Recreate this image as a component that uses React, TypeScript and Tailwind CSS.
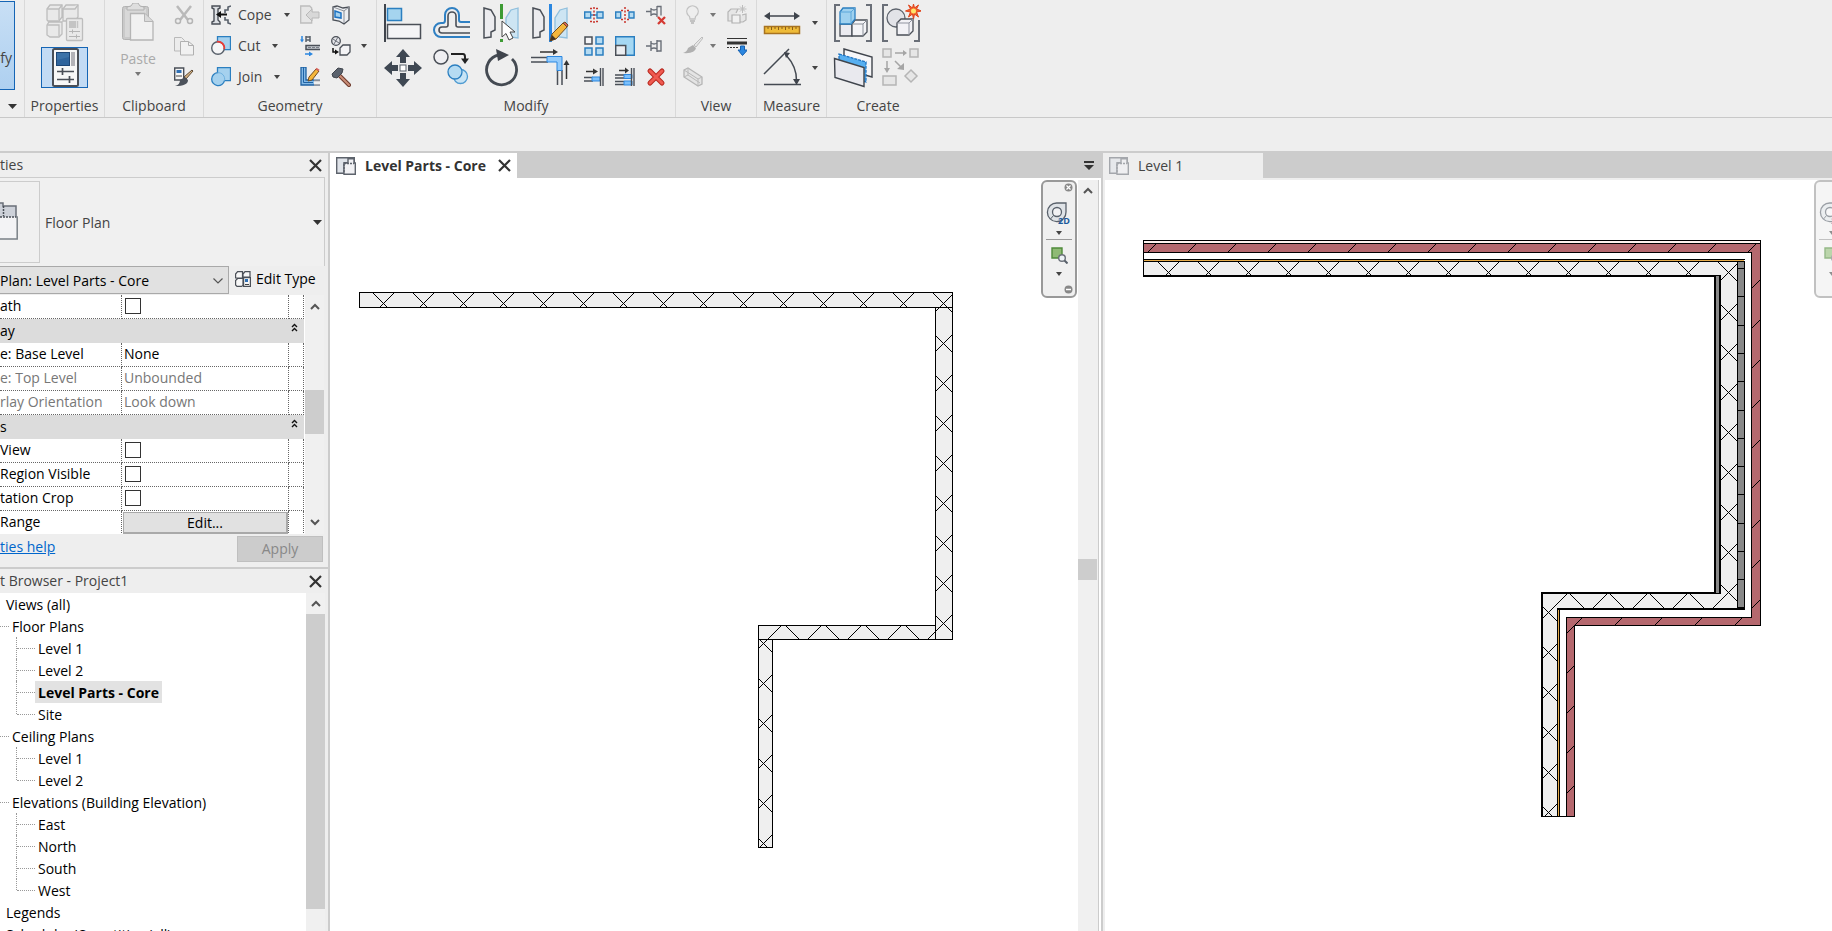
import type { ReactNode } from "react";

interface IconProps {
  children: ReactNode;
  size?: number;
}

function Icon({ children, size = 20 }: IconProps) {
  return (
    <svg
      width={size}
      height={size}
      viewBox={`0 0 ${size} ${size}`}
      fill="none"
      className="block shrink-0"
      aria-hidden="true"
    >
      {children}
    </svg>
  );
}

function Caret({ className = "text-[#444]" }: { className?: string }) {
  return (
    <svg width="6" height="4" viewBox="0 0 6 4" className={`block shrink-0 ${className}`} aria-hidden="true">
      <path d="M0 0h6L3 4z" fill="currentColor" />
    </svg>
  );
}

function WideCaret() {
  return (
    <svg width="9" height="5" viewBox="0 0 9 5" className="block shrink-0 text-[#333]" aria-hidden="true">
      <path d="M0 0h9L4.5 5z" fill="currentColor" />
    </svg>
  );
}

function Chevron({ up = false }: { up?: boolean }) {
  return (
    <svg width="10" height="7" viewBox="0 0 10 7" fill="none" className="block" aria-hidden="true">
      <path d={up ? "M1 6l4-4 4 4" : "M1 1l4 4 4-4"} stroke="#555" strokeWidth="2" />
    </svg>
  );
}

function CloseIcon() {
  return (
    <svg width="13" height="13" viewBox="0 0 13 13" fill="none" className="block" aria-hidden="true">
      <path d="M1 1l11 11M12 1L1 12" stroke="#333" strokeWidth="2.200" />
    </svg>
  );
}

/* ---------- ribbon icons, large (40 x 40) ---------- */

const typeProperties = (
  <Icon size={40}>
    <g fill="#e9e9e9" stroke="#bdbdbd" strokeWidth="1.3">
      <path d="M2 6l3-4h12v12l-3 4H3l-1-1zM18 6l3-4h12v12l-3 4H18zM2 22l2-3h13v12l-3 3H5l-3-2z" />
      <path d="M2 6h12v12M14 6l3-4M18 6h12l3-4M2 22h12v12" />
      <rect x="21.5" y="15.5" width="16" height="22" rx="1" />
    </g>
    <path d="M24 18h7v7h-7z" fill="#c4c4c4" />
    <path d="M32.500 18v7" stroke="#c4c4c4" strokeWidth="1.5" />
    <path d="M24 28.500h11M24 33.500h11M27.500 26.500v4M31.500 31.500v4" stroke="#b5b5b5" />
  </Icon>
);

const propertiesPalette = (
  <Icon size={40}>
    <rect x="8" y="1" width="25" height="37" rx="1.500" fill="#f7f7f7" stroke="#4a4f57" strokeWidth="2" />
    <rect x="11.500" y="4.500" width="13" height="13" fill="#2f649c" stroke="#1d4676" />
    <path d="M12 5h12v4l-12 3z" fill="#4a7fb4" opacity=".5" />
    <path d="M26 4h4v14h-4z" fill="#b3b3b8" />
    <path d="M12 23.500h17M12 31.500h17M17.500 20v7M24.500 28v7" stroke="#4a4f57" strokeWidth="1.700" />
  </Icon>
);

const paste = (
  <Icon size={40}>
    <rect x="4.500" y="3.500" width="26" height="33" rx="2" fill="#c9c9c9" stroke="#b2b2b2" />
    <rect x="7" y="6" width="21" height="28" fill="#d8d8d8" />
    <path d="M9 7V4l4-1 2-3h5l2 3 4 1v3z" fill="#dedede" stroke="#b0b0b0" />
    <path d="M12.500 10.500h14l8.500 8v18.500H12.500z" fill="#f1f1f1" stroke="#b5b5b5" strokeWidth="1.300" />
    <path d="M26.500 10.500v8H35" fill="#dadada" stroke="#b5b5b5" />
  </Icon>
);

const align = (
  <Icon size={40}>
    <path d="M2 1v38" stroke="#3f444c" strokeWidth="2" />
    <rect x="4.500" y="5.500" width="14" height="12" fill="#a5d4ef" stroke="#2b7fc0" strokeWidth="1.500" />
    <rect x="4.500" y="21.500" width="33" height="14" fill="#f4f4f6" stroke="#4a4f57" strokeWidth="1.500" />
  </Icon>
);

const offset = (
  <Icon size={40}>
    <path
      d="M38 34H9a6.500 6.500 0 0 1 0-14h2q2 0 2-3v-5a7 7 0 0 1 14 0v5q0 2 2 2h9"
      stroke="#2f80c3"
      strokeWidth="2"
    />
    <path
      d="M38 30H10a3 3 0 0 1 0-6h4q2 0 2-2v-9a4 4 0 0 1 8 0v9q0 2 2 2h12"
      stroke="#4a4f57"
      strokeWidth="1.600"
    />
  </Icon>
);

const mirrorPick = (
  <Icon size={40}>
    <path d="M3 5l7 2 4 7v13l-4 2v5l-7 1z" fill="#ececef" stroke="#4a4f57" strokeWidth="1.500" />
    <path d="M37 5l-7 2-5 8v12l4 2v5l8 1z" fill="#cde5f3" stroke="#8fbfdd" strokeWidth="1.300" />
    <path d="M20.500 1v15M20.500 36v3" stroke="#3d9b34" strokeWidth="3" />
    <path d="M21 18v16l4-3.500 3 6.500 4-2-3-6h5z" fill="#fff" stroke="#444" />
  </Icon>
);

const mirrorDraw = (
  <Icon size={40}>
    <path d="M3 5l7 2 4 7v13l-4 2v5l-7 1z" fill="#ececef" stroke="#4a4f57" strokeWidth="1.500" />
    <path d="M37 5l-7 2-5 8v12l4 2v5l8 1z" fill="#cde5f3" stroke="#8fbfdd" strokeWidth="1.300" />
    <path d="M20.500 1v38" stroke="#2b87e0" strokeWidth="3" />
    <path d="M20 38l2-7 11-11 4 4-11 12z" fill="#f4b63b" stroke="#704a20" />
    <path d="M33 20l2-1 3 3-1 2z" fill="#d9635b" stroke="#704a20" />
    <path d="M20 38l2-6 4 4z" fill="#443322" />
  </Icon>
);

const move = (
  <Icon size={40}>
    <g fill="#3f4853">
      <path d="M20 1l7 8h-4v6h-6V9h-4zM20 39l7-8h-4v-6h-6v6h-4zM1 20l8-7v4h6v6H9v4zM39 20l-8-7v4h-6v6h6v4z" />
    </g>
    <rect x="17" y="17" width="6" height="6" fill="#fff" stroke="#59616b" />
  </Icon>
);

const copyTool = (
  <Icon size={40}>
    <circle cx="9" cy="9" r="7" fill="#efeff2" stroke="#4a4f57" strokeWidth="1.500" />
    <path d="M19 6h12q2 0 2 3v3" stroke="#222" strokeWidth="2" />
    <path d="M29 10.500h8L33 16z" fill="#222" />
    <circle cx="28.500" cy="28.500" r="7" fill="#c8e4f5" stroke="#4f9bd1" strokeWidth="1.300" />
    <circle cx="23" cy="24" r="7" fill="#b5dbf2" stroke="#2b7fc0" strokeWidth="1.300" />
  </Icon>
);

const rotate = (
  <Icon size={40}>
    <path d="M31 11a15 15 0 1 1-13-4" stroke="#444a52" strokeWidth="2.800" />
    <path d="M15 1l13 6-11 6z" fill="#3f444c" />
  </Icon>
);

const trimCorner = (
  <Icon size={40}>
    <path d="M10 4h14" stroke="#333" strokeWidth="1.500" />
    <path d="M23 1l5 3-5 3z" fill="#333" />
    <path d="M1 9.500h17M1 14h17M27.500 22v15M32 22v15" stroke="#4a4f57" strokeWidth="1.500" />
    <path d="M17 8.500h15v14h-5V14H17z" fill="#94cbfb" stroke="#2b87e0" />
    <path d="M36.500 31V16" stroke="#333" strokeWidth="1.500" />
    <path d="M33.500 17l3-5 3 5z" fill="#333" />
  </Icon>
);

const measureLinear = (
  <Icon size={40}>
    <path d="M5 13h30" stroke="#3f444c" strokeWidth="1.500" />
    <path d="M2 13l6-4v8zM38 13l-6-4v8z" fill="#3f444c" />
    <rect x="2.500" y="23.500" width="35" height="7" fill="#eebb38" stroke="#a87320" strokeWidth="1.500" />
    <path d="M6 24v2M9.500 24v3M13 24v2M16.500 24v3M20 24v2M23.500 24v3M27 24v2M30.500 24v3M34 24v2" stroke="#8a5e18" />
  </Icon>
);

const measureAngle = (
  <Icon size={40}>
    <path d="M2 36.500h37M2 26L27 1M24 7q11 12 10.500 26" stroke="#444a52" strokeWidth="1.500" />
    <path d="M22 4l6 1-4 5zM31 31h7l-3.500 6z" fill="#3f444c" />
  </Icon>
);

const createAssembly = (
  <Icon size={40}>
    <path d="M7 2H2v36h5M33 2h5v36h-5" stroke="#6a6f78" strokeWidth="2" />
    <path d="M7 21h12v12H7z" fill="#ebebf0" stroke="#4a4f57" strokeWidth="1.300" />
    <path d="M19 21l3-4h12v12l-4 4H19z" fill="#f4f4f7" stroke="#4a4f57" strokeWidth="1.300" />
    <path d="M19 21h11v12M30 21l4-4" stroke="#8a8f98" />
    <path d="M7 9l3-4h12v11l-4 5H7z" fill="#9fd1ef" stroke="#2b7fc0" strokeWidth="1.300" />
    <path d="M7 9h11v12M18 9l4-4" stroke="#5da7da" />
  </Icon>
);

const createGroup = (
  <Icon size={40}>
    <path d="M7 2H2v36h5M33 38h5V17" stroke="#6a6f78" strokeWidth="2" />
    <circle cx="15" cy="15" r="9" fill="#e2e3e8" stroke="#5d636c" strokeWidth="1.300" />
    <path d="M16 20l4-4h12v12l-4 4H16z" fill="#f2f2f6" stroke="#4a4f57" strokeWidth="1.300" />
    <path d="M16 20h12v12M28 20l4-4" stroke="#9094a0" />
    <path
      d="M32.500 1l1 4 4-3-2 4 5 2-5 1 2 5-4-3-1 5-1-5-4 3 2-5-5-1 5-2-2-4 4 3z"
      fill="#f4622c"
      stroke="#e0441c"
    />
    <circle cx="32.500" cy="8" r="2.500" fill="#ffe66a" />
  </Icon>
);

const createParts = (
  <Icon size={40}>
    <path d="M11 1l28 8v20l-28-8z" fill="#f6f6f8" stroke="#3f444c" strokeWidth="1.400" />
    <path d="M6 6l27 8v20L6 27z" fill="#57aff0" stroke="#1e73c2" strokeWidth="1.300" strokeDasharray="3 1" />
    <path d="M1.500 10.500L31 19.500v19L2 29.500z" fill="#e9e9ee" stroke="#3f444c" strokeWidth="1.400" />
  </Icon>
);

const createSimilar = (
  <Icon size={40}>
    <g fill="#e6e6e6" stroke="#b5b5b5" strokeWidth="1.500">
      <path d="M2 1h8v8H2zM29 1h8v8h-8zM2 28h13v9H2zM30 22l6 6-6 6-6-6z" />
    </g>
    <path d="M14 5h9M6 13v8M14 13l6 6" stroke="#a5a5a5" strokeWidth="1.500" />
    <path d="M22 2l4 3-4 3zM3 20h6l-3 5zM16 21l7-6v7z" fill="#a5a5a5" />
  </Icon>
);

/* ---------- ribbon icons, small (20 x 20) ---------- */

const cut = (
  <Icon>
    <path d="M3 1l11 14M17 1L6 15" stroke="#b9b9b9" strokeWidth="2.500" />
    <circle cx="4" cy="16" r="2.500" stroke="#b5b5b5" strokeWidth="1.500" />
    <circle cx="16" cy="16" r="2.500" stroke="#b5b5b5" strokeWidth="1.500" />
  </Icon>
);

const copyClip = (
  <Icon>
    <path d="M.5 1.500h7l3 3V15H.500z" fill="#ececec" stroke="#b9b9b9" />
    <path d="M6.500 5.500h8l5 4V19h-13z" fill="#f1f1f1" stroke="#b0b0b0" />
    <path d="M14.500 5.500v4h5" stroke="#b0b0b0" />
  </Icon>
);

const matchType = (
  <Icon>
    <path d="M.700 1h9v12h-9z" fill="#f5f5f5" stroke="#4a4f57" strokeWidth="1.400" />
    <path d="M2.500 3h5v3h-5z" fill="#2f70b5" />
    <path d="M2 9h6" stroke="#444" />
    <path d="M19 4l-7 8-2-2 8-7z" fill="#d6b283" stroke="#5c4a35" />
    <path d="M1 19q5-1 5-6l5-3 3 3q0 6-13 6z" fill="#4c525b" />
  </Icon>
);

const cope = (
  <Icon>
    <path d="M1 1h8v2L7 4v11l2 2v2H1v-2l2-1V4L1 3z" fill="#dcdfe3" stroke="#4a4f57" strokeWidth="1.400" />
    <path d="M20 1l-3 1v3h-3v3M14 12v3h3v3l3 1" fill="#dcdfe3" stroke="#59616b" strokeWidth="1.600" />
    <path d="M8 9.500h8" stroke="#111" strokeWidth="2" />
    <path d="M5 9.500L10 6v7z" fill="#111" />
  </Icon>
);

const cutGeometry = (
  <Icon>
    <path d="M6.500.700h13v13h-13z" fill="#a5d1ee" stroke="#2b7fc0" strokeWidth="1.300" />
    <circle cx="7" cy="12" r="6.300" fill="#f5f5f6" stroke="#59616b" strokeWidth="1.400" />
    <path d="M6 5.700a6.300 6.300 0 0 1 7.200 7.500" stroke="#ee3a34" strokeWidth="1.700" />
  </Icon>
);

const joinGeometry = (
  <Icon>
    <path d="M6.500.700h13v13h-6a6.500 6.500 0 1 1-7-8z" fill="#a5d1ee" stroke="#2b7fc0" strokeWidth="1.300" />
    <path d="M6.500 5.700a6.500 6.500 0 0 1 7 8" stroke="#6fb2e0" />
  </Icon>
);

const joinEnd = (
  <Icon>
    <path d="M.7 1h9l2 2v15H.7z" fill="#e6e6e6" stroke="#bdbdbd" strokeWidth="1.300" />
    <path d="M19 7v6h-7v3l-6-6 6-6v3z" fill="#d8d8d8" stroke="#b9b9b9" />
  </Icon>
);

const wallJoins = (
  <Icon>
    <path d="M2 0v4M5 18h6" stroke="#2b87e0" strokeWidth="1.500" />
    <path d="M0 3.500h4l-2 3zM9 15.500l4 2.500-4 2.500z" fill="#2b87e0" />
    <path d="M6 0v6M10 0v6M6 1h4M6 4h4" stroke="#59616b" strokeWidth="1.500" />
    <path d="M20 9.500H6v4h14" fill="#c9ccd2" stroke="#4a4f57" strokeWidth="1.500" />
    <path d="M8 11.500h12" stroke="#7a7f88" strokeDasharray="3 1" />
  </Icon>
);

const wallOpening = (
  <Icon>
    <path d="M1 0v18h19v-5H6V0z" fill="#84b9e6" stroke="#1e62a4" strokeWidth="1.300" />
    <path d="M3.500 0v15.500H13" stroke="#1e62a4" />
    <path d="M14 12.500h6v6h-6z" fill="#eee" />
    <path d="M14 13.500h6M14 18h6" stroke="#8a8f98" strokeWidth="1.300" />
    <path d="M9 10l7-8 3 2-7 9-4 1z" fill="#f4b63b" stroke="#704a20" />
    <path d="M16 1.500l3 2" stroke="#d9635b" strokeWidth="2" />
  </Icon>
);

const splitFace = (
  <Icon>
    <path d="M2 2l4-1 6 2 6-1v13l-5 4-5-3-6-1z" fill="#eceef1" stroke="#4a4f57" strokeWidth="1.300" />
    <path d="M13 6v12M2 2l11 4 5-4" stroke="#8a8f98" />
    <path d="M4 6l6 2v5l-6-1z" fill="#a5d1ee" stroke="#1e73c2" strokeWidth="1.500" />
  </Icon>
);

const paintMaterial = (
  <Icon>
    <circle cx="5" cy="5" r="4.300" fill="#e5e6ea" stroke="#4a4f57" strokeWidth="1.300" />
    <path d="M2 3l6 4M3 8l4-7" stroke="#6a6f78" />
    <path d="M9 12l3-3h7v7l-3 3H9z" fill="#f4f4f6" stroke="#4a4f57" strokeWidth="1.300" />
    <path d="M2 12v4h3" stroke="#111" strokeWidth="1.500" />
    <path d="M4 13.500l4 2.500-4 2.500z" fill="#111" />
  </Icon>
);

const demolish = (
  <Icon>
    <path d="M9 9l9 9" stroke="#6e3a2c" strokeWidth="4" strokeLinecap="round" />
    <path d="M9 9l9 9" stroke="#c98d77" strokeWidth="2" strokeLinecap="round" />
    <path d="M1 7l6-6 5 1-1 4-5 5-4-1z" fill="#5a626d" stroke="#3f444c" />
  </Icon>
);

const splitElement = (
  <Icon>
    <path d="M.7 7h6v6h-6zM13 7h6v6h-6z" fill="#b5dbf2" stroke="#2b7fc0" strokeWidth="1.400" />
    <path d="M7 10h6" stroke="#2b7fc0" strokeWidth="1.400" />
    <path d="M10 2v17" stroke="#c9342c" strokeWidth="1.500" strokeDasharray="2 1.500" />
    <path d="M6 3.500h2M12 3.500h2M6 16.500h2M12 16.500h2" stroke="#c9342c" strokeWidth="1.300" />
  </Icon>
);

const splitGap = (
  <Icon>
    <path d="M.7 7h5v6h-5zM14 7h5v6h-5z" fill="#b5dbf2" stroke="#2b7fc0" strokeWidth="1.400" />
    <path d="M10 2v17" stroke="#c9342c" strokeWidth="1.500" strokeDasharray="2 1.500" />
    <path d="M6 5.500h2M12 5.500h2M6 14.500h2M12 14.500h2" stroke="#c9342c" strokeWidth="1.300" />
  </Icon>
);

const unpin = (
  <Icon>
    <path
      d="M0 6.500h5M5 3v8M5 4q3 2 6 0M5 10q3-2 6 0M11 1v11M11 1.500h4v9"
      stroke="#6a6f78"
      strokeWidth="1.300"
    />
    <path d="M12 12l7 7M19 12l-7 7" stroke="#d43a33" strokeWidth="2.300" />
  </Icon>
);

const pin = (
  <Icon>
    <path
      d="M0 10h5M5 5v10M5 7q3 2 6 0M5 13q3-2 6 0M11 4v12M11 5h4v10h-4"
      stroke="#6a6f78"
      strokeWidth="1.400"
    />
  </Icon>
);

const arrayTool = (
  <Icon>
    <path d="M1 1h7v7H1z" fill="#f4f4f6" stroke="#4a4f57" strokeWidth="1.500" />
    <path d="M12 1h7v7h-7zM1 12h7v7H1zM12 12h7v7h-7z" fill="#b5dbf2" stroke="#2b7fc0" strokeWidth="1.500" />
  </Icon>
);

const scaleTool = (
  <Icon>
    <path d="M.7.700h18.600v18.600H.700z" fill="#a5d8f3" stroke="#2b7fc0" strokeWidth="1.400" />
    <path d="M.7 9.500h10v9.800H.700z" fill="#eceef1" stroke="#4a4f57" strokeWidth="1.500" />
  </Icon>
);

const trimSingle = (
  <Icon>
    <path d="M2 4.500h8" stroke="#333" strokeWidth="1.500" />
    <path d="M9 1.500l5 3-5 3z" fill="#333" />
    <path d="M0 10.500h9M0 14h9" stroke="#4a4f57" strokeWidth="1.400" />
    <path d="M8 10h8v4H8z" fill="#7cc0fb" stroke="#2b87e0" />
    <path d="M16.500 1v18M19 1v18" stroke="#4a4f57" strokeWidth="1.400" />
  </Icon>
);

const trimMultiple = (
  <Icon>
    <path d="M4 3.500h7" stroke="#333" strokeWidth="1.500" />
    <path d="M10 .5l4 3-4 3z" fill="#333" />
    <path d="M0 8h9M0 11h9M0 14.500h9M0 17.500h9" stroke="#4a4f57" strokeWidth="1.300" />
    <path d="M9 7.500h8v4H9zM9 14h8v4H9z" fill="#7cc0fb" stroke="#2b87e0" />
    <path d="M16.500 1v18M19 1v18" stroke="#4a4f57" strokeWidth="1.400" />
  </Icon>
);

const deleteTool = (
  <Icon>
    <path d="M4 4l12 12M16 4L4 16" stroke="#b8281f" strokeWidth="5" strokeLinecap="round" />
    <path d="M4 4l12 12M16 4L4 16" stroke="#ef5a50" strokeWidth="3" strokeLinecap="round" />
  </Icon>
);

const bulb = (
  <Icon>
    <path d="M7 14q0-3-2-4a5.700 5.700 0 1 1 9 0q-2 1-2 4z" fill="#eee" stroke="#c2c2c2" strokeWidth="1.300" />
    <path d="M7 16h5M8 18h3" stroke="#b5b5b5" strokeWidth="1.500" />
  </Icon>
);

const paintbrush = (
  <Icon>
    <path d="M19 1l-8 8 2 2 7-9z" fill="#e6e6e6" stroke="#bdbdbd" />
    <path d="M0 17q4-1 5-5l5-3 3 3q-1 6-13 5z" fill="#b0b0b0" />
  </Icon>
);

const displace = (
  <Icon>
    <path d="M5 16H1V7l3-3h7l-2 4" fill="#e6e6e6" stroke="#b5b5b5" strokeWidth="1.200" />
    <path d="M12 17h4l3-2V9l-4 1" fill="#e6e6e6" stroke="#b5b5b5" strokeWidth="1.200" />
    <path d="M5 10h8v8H5z" fill="#f1f1f1" stroke="#b0b0b0" strokeWidth="1.200" />
    <path d="M15.500 0v8M11.500 4h8M13 1.500l5 5M18 1.500l-5 5" stroke="#bdbdbd" />
  </Icon>
);

const lineWork = (
  <Icon>
    <path d="M0 2.500h20" stroke="#333" />
    <path d="M0 7h20" stroke="#333" strokeWidth="3" />
    <path d="M0 11.500h11" stroke="#333" strokeDasharray="2 1" />
    <path d="M13.500 10h4v4h3L15.500 19.500 11 14h2.500z" fill="#2b87e0" stroke="#1661b0" />
  </Icon>
);

const selectionBox = (
  <Icon>
    <path d="M1 3l4-2 14 9v7l-4 2-14-9z" fill="#e4e4e4" stroke="#b5b5b5" strokeWidth="1.300" />
    <path d="M1 3l14 9v7M15 12l4-2M5 1v7l12 8M5 8l-4 2" stroke="#b9b9b9" />
  </Icon>
);

const editTypeIcon = (
  <svg width="16" height="16" viewBox="0 0 16 16" fill="none" className="block shrink-0" aria-hidden="true">
    <path
      d="M.6 3l2-2.400h4.900V7H.600zM8 3l2-2.400h5V6H8zM.600 9.500l2-2H8v7L6.500 15.400H2L.600 14z"
      fill="#f7f7f7"
      stroke="#4a4f57"
      strokeWidth="1.200"
    />
    <rect x="8.600" y="6.600" width="6.800" height="8.800" fill="#f7f7f7" stroke="#4a4f57" strokeWidth="1.200" />
    <path d="M10 8h3v3h-3z" fill="#2f70b5" />
    <path d="M10 13.500h4" stroke="#444" />
  </svg>
);

function PlanIcon() {
  return (
    <svg width="20" height="18" viewBox="0 0 20 18" fill="none" className="block shrink-0" aria-hidden="true">
      <path d="M.7.700h17.600v5h-10v10.600H.700z" fill="#dfe3e9" stroke="#5d636c" strokeWidth="1.400" />
      <path d="M12 1.700h6V6h1.300v11.300H8V6h4z" fill="#f1f1f4" stroke="#5d636c" strokeWidth="1.400" />
      <path d="M8 6.500h10M8 7v9" stroke="#5d636c" strokeWidth="1.400" strokeDasharray="2 1" />
    </svg>
  );
}

/* ---------- ribbon ---------- */

interface ToolButtonProps {
  label: string;
  icon: ReactNode;
  disabled?: boolean;
}

function ToolButton({ label, icon, disabled = false }: ToolButtonProps) {
  return (
    <button type="button" aria-label={label} disabled={disabled} className="block">
      {icon}
    </button>
  );
}

function RibbonGroup({ title, width, children }: { title: string; width: string; children: ReactNode }) {
  return (
    <section className={`flex shrink-0 flex-col justify-between border-r border-[#d9d9d9] ${width}`}>
      <div className="flex">{children}</div>
      <h2 className="h-[22px] text-center leading-[22px]">{title}</h2>
    </section>
  );
}

function LargeColumn({ children }: { children: ReactNode }) {
  return <div className="flex flex-col gap-[5px] pt-[3px]">{children}</div>;
}

function SmallColumn({ children }: { children: ReactNode }) {
  return <div className="flex flex-col gap-[11px] pt-[5px]">{children}</div>;
}

function DropTool({ text, icon }: { text: string; icon: ReactNode }) {
  return (
    <button type="button" className="flex h-5 items-center">
      {icon}
      <span className="ml-[7px] leading-[22px]">{text}</span>
      <span className="ml-3">
        <Caret />
      </span>
    </button>
  );
}

function Ribbon() {
  return (
    <header className="flex h-[118px] shrink-0 border-b border-[#c8c8c8] text-[#444]">
      <div className="flex w-[25px] shrink-0 flex-col justify-between border-r border-[#d9d9d9] pt-px">
        <button
          type="button"
          className="flex h-[89px] w-[15px] items-center justify-end border border-l-0 border-[#1565b5] bg-linear-to-b from-[#c8dff5] to-[#aed0f0] pt-6 pr-0.5"
        >
          fy
        </button>
        <button type="button" aria-label="Select" className="flex h-[22px] items-center pl-2">
          <WideCaret />
        </button>
      </div>

      <RibbonGroup title="Properties" width="w-20">
        <div className="mx-auto flex flex-col items-center gap-1 pt-[3px]">
          <ToolButton label="Type Properties" icon={typeProperties} disabled />
          <button
            type="button"
            aria-label="Properties"
            aria-pressed="true"
            className="flex h-[41px] w-[47px] justify-center border border-[#1565b5] bg-[#c3dbf4]"
          >
            {propertiesPalette}
          </button>
        </div>
      </RibbonGroup>

      <RibbonGroup title="Clipboard" width="w-[99px]">
        <div className="flex pl-[13px]">
          <button type="button" disabled className="flex w-10 flex-col items-center pt-[3px] text-[#aaa]">
            {paste}
            <span className="mt-1.5 leading-5">Paste</span>
            <span className="mt-[3px]">
              <Caret className="text-[#777]" />
            </span>
          </button>
          <div className="ml-4">
            <SmallColumn>
              <ToolButton label="Cut to Clipboard" icon={cut} disabled />
              <ToolButton label="Copy to Clipboard" icon={copyClip} disabled />
              <ToolButton label="Match Type Properties" icon={matchType} />
            </SmallColumn>
          </div>
        </div>
      </RibbonGroup>

      <RibbonGroup title="Geometry" width="w-[173px]">
        <div className="flex pl-[7px]">
          <div className="w-[89px]">
            <SmallColumn>
              <DropTool text="Cope" icon={cope} />
              <DropTool text="Cut" icon={cutGeometry} />
              <DropTool text="Join" icon={joinGeometry} />
            </SmallColumn>
          </div>
          <SmallColumn>
            <ToolButton label="Join/Unjoin Roof" icon={joinEnd} disabled />
            <ToolButton label="Beam/Column Joins" icon={wallJoins} />
            <ToolButton label="Wall Joins" icon={wallOpening} />
          </SmallColumn>
          <div className="ml-[11px]">
            <SmallColumn>
              <ToolButton label="Split Face" icon={splitFace} />
              <button type="button" aria-label="Paint" className="flex items-center gap-2.5">
                {paintMaterial}
                <Caret />
              </button>
              <ToolButton label="Demolish" icon={demolish} />
            </SmallColumn>
          </div>
        </div>
      </RibbonGroup>

      <RibbonGroup title="Modify" width="w-[299px]">
        <div className="flex gap-[9px] pl-1.5">
          <LargeColumn>
            <ToolButton label="Align" icon={align} />
            <ToolButton label="Move" icon={move} />
          </LargeColumn>
          <LargeColumn>
            <ToolButton label="Offset" icon={offset} />
            <ToolButton label="Copy" icon={copyTool} />
          </LargeColumn>
          <LargeColumn>
            <ToolButton label="Mirror - Pick Axis" icon={mirrorPick} />
            <ToolButton label="Rotate" icon={rotate} />
          </LargeColumn>
          <LargeColumn>
            <ToolButton label="Mirror - Draw Axis" icon={mirrorDraw} />
            <ToolButton label="Trim/Extend to Corner" icon={trimCorner} />
          </LargeColumn>
        </div>
        <div className="ml-[14px] flex gap-[11px]">
          <SmallColumn>
            <ToolButton label="Split Element" icon={splitElement} />
            <ToolButton label="Array" icon={arrayTool} />
            <ToolButton label="Trim/Extend Single Element" icon={trimSingle} />
          </SmallColumn>
          <SmallColumn>
            <ToolButton label="Split with Gap" icon={splitGap} />
            <ToolButton label="Scale" icon={scaleTool} />
            <ToolButton label="Trim/Extend Multiple Elements" icon={trimMultiple} />
          </SmallColumn>
          <SmallColumn>
            <ToolButton label="Unpin" icon={unpin} />
            <ToolButton label="Pin" icon={pin} />
            <ToolButton label="Delete" icon={deleteTool} />
          </SmallColumn>
        </div>
      </RibbonGroup>

      <RibbonGroup title="View" width="w-[81px]">
        <div className="flex gap-[11px] pl-[7px]">
          <SmallColumn>
            <button type="button" aria-label="Hide in View" className="flex items-center gap-[7px]">
              {bulb}
              <Caret className="text-[#777]" />
            </button>
            <button type="button" aria-label="Override Graphics" className="flex items-center gap-[7px]">
              {paintbrush}
              <Caret className="text-[#777]" />
            </button>
            <ToolButton label="Selection Box" icon={selectionBox} disabled />
          </SmallColumn>
          <SmallColumn>
            <ToolButton label="Displace Elements" icon={displace} disabled />
            <ToolButton label="Linework" icon={lineWork} />
          </SmallColumn>
        </div>
      </RibbonGroup>

      <RibbonGroup title="Measure" width="w-[70px]">
        <div className="pl-[5px]">
          <LargeColumn>
            <button type="button" aria-label="Measure Between Two References" className="flex items-center gap-2.5">
              {measureLinear}
              <Caret />
            </button>
            <button type="button" aria-label="Angular Dimension" className="flex items-center gap-2.5">
              {measureAngle}
              <Caret />
            </button>
          </LargeColumn>
        </div>
      </RibbonGroup>

      <section className="flex w-[102px] shrink-0 flex-col justify-between">
        <div className="flex gap-2 pl-1.5">
          <LargeColumn>
            <ToolButton label="Create Assembly" icon={createAssembly} />
            <ToolButton label="Create Parts" icon={createParts} />
          </LargeColumn>
          <LargeColumn>
            <ToolButton label="Create Group" icon={createGroup} />
            <ToolButton label="Create Similar" icon={createSimilar} disabled />
          </LargeColumn>
        </div>
        <h2 className="h-[22px] text-center leading-[22px]">Create</h2>
      </section>
    </header>
  );
}

/* ---------- properties palette ---------- */

type PropertyRow =
  | { kind: "header"; label: string }
  | { kind: "text"; label: string; value: string; muted?: boolean }
  | { kind: "check"; label: string }
  | { kind: "button"; label: string; value: string };

const propertyRows: PropertyRow[] = [
  { kind: "check", label: "ath" },
  { kind: "header", label: "ay" },
  { kind: "text", label: "e: Base Level", value: "None" },
  { kind: "text", label: "e: Top Level", value: "Unbounded", muted: true },
  { kind: "text", label: "rlay Orientation", value: "Look down", muted: true },
  { kind: "header", label: "s" },
  { kind: "check", label: "View" },
  { kind: "check", label: "Region Visible" },
  { kind: "check", label: "tation Crop" },
  { kind: "button", label: "Range", value: "Edit..." }
];

function PropertyGridRow({ row }: { row: PropertyRow }) {
  if (row.kind === "header") {
    return (
      <tr className="h-6 bg-[#dcdcdc]">
        <th colSpan={3} className="p-0 text-left font-normal">
          <div className="flex h-6 items-start justify-between pr-1.5">
            <span className="leading-6">{row.label}</span>
            <svg width="7" height="9" viewBox="0 0 7 9" fill="none" className="mt-1" aria-hidden="true">
              <path d="M1 4l2.500-2.500L6 4M1 8l2.500-2.500L6 8" stroke="#111" strokeWidth="1.400" />
            </svg>
          </div>
        </th>
      </tr>
    );
  }

  const id = `prop-${row.label.replace(/\W/g, "")}`;
  const cell = "border-r border-b border-dotted border-[#666] p-0 align-top leading-[21px]";

  return (
    <tr className={`h-6 ${row.kind === "text" && row.muted ? "text-[#777]" : ""}`}>
      <td className={`${cell} whitespace-nowrap`}>
        {row.kind === "check" ? <label htmlFor={id}>{row.label}</label> : row.label}
      </td>
      <td className={cell}>
        {row.kind === "check" && (
          <input
            id={id}
            type="checkbox"
            className="mt-[3px] ml-[3px] block size-4 appearance-none border border-[#333] bg-white"
          />
        )}
        {row.kind === "text" && <span className="block pl-0.5">{row.value}</span>}
        {row.kind === "button" && (
          <button
            type="button"
            className="mt-px ml-px block h-[22px] w-[165px] border border-r-2 border-b-2 border-[#a9a9a9] bg-[#e1e1e1] leading-5"
          >
            {row.value}
          </button>
        )}
      </td>
      <td className={cell} />
    </tr>
  );
}

function PropertiesPanel() {
  return (
    <section className="flex h-[414px] shrink-0 flex-col">
      <div className="flex h-6 items-center justify-between pr-1.5 text-[#444]">
        <h2 className="leading-6">ties</h2>
        <button type="button" aria-label="Close properties">
          <CloseIcon />
        </button>
      </div>

      <button
        type="button"
        className="mr-[3px] flex h-[89px] items-center border-t border-r border-[#ccc] bg-[#f0f0f0] pr-0.5 text-[#444]"
      >
        <span className="flex h-[82px] w-10 items-center border border-l-0 border-[#ccc]">
          <svg width="18" height="40" viewBox="0 0 18 40" fill="none" aria-hidden="true">
            <path d="M0 1h3v3h13v12H0z" fill="#cdd1d9" />
            <path d="M0 1h3v3h13v12" stroke="#6a6f78" strokeWidth="1.500" />
            <path d="M0 15h17v22H0z" fill="#f3f3f5" />
            <path d="M16 15h1.200v22H0" stroke="#7a8087" strokeWidth="1.500" />
            <path d="M0 15h16M3.500 4v10" stroke="#4a4f57" strokeWidth="1.500" strokeDasharray="2 1" />
          </svg>
        </span>
        <span className="ml-[5px] flex-1 pt-px text-left">Floor Plan</span>
        <WideCaret />
      </button>

      <div className="flex h-[29px] shrink-0 items-start">
        <div className="relative w-[229px]">
          <select
            aria-label="View"
            className="block h-7 w-full appearance-none border border-l-0 border-[#a9a9a9] bg-[#e1e1e1] pt-px"
          >
            <option>Plan: Level Parts - Core</option>
          </select>
          <svg
            width="10"
            height="6"
            viewBox="0 0 10 6"
            fill="none"
            className="pointer-events-none absolute top-3 right-1.5"
            aria-hidden="true"
          >
            <path d="M.5.500L5 5 9.500.500" stroke="#555" strokeWidth="1.200" />
          </svg>
        </div>
        <button type="button" className="ml-1.5 flex h-[26px] items-center gap-[5px]">
          {editTypeIcon}
          Edit Type
        </button>
      </div>

      <div className="flex h-[239px] shrink-0 overflow-hidden pr-1">
        <div className="flex-1 overflow-hidden bg-white">
          <table className="w-[304px] table-fixed border-separate border-spacing-0">
            <colgroup>
              <col className="w-[122px]" />
              <col className="w-[167px]" />
              <col className="w-[15px]" />
            </colgroup>
            <tbody>
              {propertyRows.map((row) => (
                <PropertyGridRow key={row.label} row={row} />
              ))}
            </tbody>
          </table>
        </div>
        <div className="flex w-[19px] flex-col items-center bg-[#f0f0f0] py-2">
          <Chevron up />
          <div className="mt-20 mb-auto h-11 w-full bg-[#cdcdcd]" />
          <Chevron />
        </div>
      </div>

      <div className="flex flex-1 items-start justify-between pt-0.5 pr-[5px]">
        <a href="#help" className="leading-[22px] text-[#0066cc] underline">
          ties help
        </a>
        <button type="button" disabled className="h-[26px] w-[86px] border border-[#bfbfbf] bg-[#ccc] text-[#888]">
          Apply
        </button>
      </div>
    </section>
  );
}

/* ---------- project browser ---------- */

interface TreeNode {
  label: string;
  level: 0 | 1 | 2;
  last?: boolean;
  selected?: boolean;
}

const treeNodes: TreeNode[] = [
  { label: "Views (all)", level: 0 },
  { label: "Floor Plans", level: 1 },
  { label: "Level 1", level: 2 },
  { label: "Level 2", level: 2 },
  { label: "Level Parts - Core", level: 2, selected: true },
  { label: "Site", level: 2, last: true },
  { label: "Ceiling Plans", level: 1 },
  { label: "Level 1", level: 2 },
  { label: "Level 2", level: 2, last: true },
  { label: "Elevations (Building Elevation)", level: 1 },
  { label: "East", level: 2 },
  { label: "North", level: 2 },
  { label: "South", level: 2 },
  { label: "West", level: 2, last: true },
  { label: "Legends", level: 0 },
  { label: "Schedules/Quantities (all)", level: 0 }
];

function TreeRow({ node }: { node: TreeNode }) {
  if (node.level === 0) {
    return <li className="h-[22px] pl-1.5 leading-6">{node.label}</li>;
  }

  if (node.level === 1) {
    return (
      <li className="flex h-[22px] leading-6">
        <span className="mt-[11px] mr-[3px] w-[9px] border-t border-dotted border-[#999]" />
        {node.label}
      </li>
    );
  }

  return (
    <li className="flex h-[22px] pl-4 leading-6">
      <span className={`border-l border-dotted border-[#999] ${node.last ? "h-[11px]" : "h-[22px]"}`} />
      <span className="mt-[11px] w-[18px] border-t border-dotted border-[#999]" />
      <span className={`px-[3px] ${node.selected ? "bg-[#e2e2e2] font-bold" : ""}`}>{node.label}</span>
    </li>
  );
}

function ProjectBrowser() {
  return (
    <section className="flex min-h-0 flex-1 flex-col border-t-2 border-[#ccc]">
      <div className="flex h-6 shrink-0 items-center justify-between pr-1.5 text-[#444]">
        <h2 className="leading-6">t Browser - Project1</h2>
        <button type="button" aria-label="Close project browser">
          <CloseIcon />
        </button>
      </div>
      <div className="flex min-h-0 flex-1 pr-[3px]">
        <ul className="flex-1 overflow-hidden bg-white">
          {treeNodes.map((node, index) => (
            <TreeRow key={index} node={node} />
          ))}
        </ul>
        <div className="flex w-[19px] flex-col items-center bg-[#f0f0f0] pt-[7px]">
          <Chevron up />
          <div className="mt-[7px] mb-[22px] w-full flex-1 bg-[#cdcdcd]" />
        </div>
      </div>
    </section>
  );
}

/* ---------- drawing views ---------- */

function NavigationBar() {
  return (
    <div className="flex h-[118px] w-9 flex-col items-center rounded-md border-2 border-[#999] bg-[#f0f0f0]">
      <button type="button" aria-label="Close navigation bar" className="mt-px mr-0.5 self-end">
        <svg width="9" height="9" viewBox="0 0 9 9" fill="none" className="block" aria-hidden="true">
          <circle cx="4.500" cy="4.500" r="4" fill="#888" />
          <path d="M2.500 2.500l4 4M6.500 2.500l-4 4" stroke="#fff" strokeWidth="1.200" />
        </svg>
      </button>
      <button type="button" aria-label="Steering wheel" className="mt-2.5 flex flex-col items-center gap-1">
        <svg width="26" height="25" viewBox="0 0 26 25" fill="none" className="block" aria-hidden="true">
          <path d="M11 1h9v9a9.300 9.300 0 1 1-9-9z" fill="#dfe3e7" stroke="#59616b" strokeWidth="1.300" />
          <circle cx="11" cy="10" r="4.500" fill="#f2f2f4" stroke="#59616b" strokeWidth="1.300" />
          <path d="M4.500 17l3-3.500" stroke="#59616b" />
          <text x="12" y="22" fontSize="9" fontWeight="700" fill="#1b5a9c">
            2D
          </text>
        </svg>
        <Caret />
      </button>
      <div className="mt-1 h-px w-[26px] bg-[#999]" />
      <button type="button" aria-label="Zoom" className="mt-[7px] flex flex-col items-center gap-2">
        <svg width="17" height="17" viewBox="0 0 17 17" fill="none" className="block" aria-hidden="true">
          <path d="M1 1h10v10H1z" fill="#8fba75" stroke="#4f8a3a" strokeWidth="1.400" />
          <circle cx="11" cy="11" r="3.300" fill="#edf3f7" stroke="#6a6f78" strokeWidth="1.400" />
          <path d="M13.500 13.500l3 3" stroke="#59616b" strokeWidth="2" />
        </svg>
        <Caret />
      </button>
      <button type="button" aria-label="Minimize navigation bar" className="mt-auto mr-0.5 mb-0.5 self-end">
        <svg width="9" height="9" viewBox="0 0 9 9" fill="none" className="block" aria-hidden="true">
          <circle cx="4.500" cy="4.500" r="4" fill="#888" />
          <path d="M2 4.500h5" stroke="#fff" strokeWidth="1.500" />
        </svg>
      </button>
    </div>
  );
}

/* Core parts only: four pieces of insulated stud wall on a shared 40 unit hatch. */
function CorePlan() {
  return (
    <svg className="block h-full w-full" shapeRendering="crispEdges" role="img" aria-label="Core wall parts">
      <defs>
        <pattern id="core-hatch" x="33" y="105" width="40" height="40" patternUnits="userSpaceOnUse">
          <path d="M-1 -1L41 41M41 0L0 41M2 -1L-1 2" stroke="#000" />
        </pattern>
      </defs>
      <g fill="#efefef">
        <path d="M29 114h594v16H29zM605 130h18v332h-18zM428 447h178v15H428zM428 462h15v208h-15z" />
      </g>
      <g fill="url(#core-hatch)" stroke="#000">
        <rect x="29.500" y="114.500" width="593" height="15" />
        <rect x="605.500" y="129.500" width="17" height="332" />
        <rect x="428.500" y="447.500" width="177" height="14" />
        <rect x="428.500" y="461.500" width="14" height="208" />
      </g>
    </svg>
  );
}

const blockJoints = [88, 116, 145, 173, 201, 230, 258, 286, 314, 343, 371, 399, 427];

/* Full wall build-up: brick skin, cavity, sheathing, insulated studs and block lining. */
function LevelPlan() {
  const brick = "M38.500 63.500H655.500V445.500H469.500V636.500H461.500V437.500H646.500V72.500H38.500z";
  const stud = "M38.500 81.500H632.500V428.500H452.500V636.500H437.500V413.500H614.500V95.500H38.500z";

  return (
    <svg className="block h-full w-full" shapeRendering="crispEdges" role="img" aria-label="Level 1 walls">
      <defs>
        <pattern id="stud-hatch" x="43" y="72" width="40" height="40" patternUnits="userSpaceOnUse">
          <path d="M-1 -1L41 41M41 0L0 41M2 -1L-1 2" stroke="#000" />
        </pattern>
        <pattern id="brick-hatch" x="32" y="3" width="40" height="40" patternUnits="userSpaceOnUse">
          <path d="M41 -1L-1 41" stroke="#000" />
        </pattern>
      </defs>

      <rect x="38.500" y="60.500" width="617" height="3" fill="#fff3ef" stroke="#000" />
      <path d={brick} fill="#b5686e" />
      <path d={brick} fill="url(#brick-hatch)" stroke="#000" />
      <path d="M38.500 72v10" stroke="#000" />

      <path d={stud} fill="#efefef" />
      <path d={stud} fill="url(#stud-hatch)" stroke="#000" />
      <path d="M38 96h577V413H437v224" fill="none" stroke="#000" strokeWidth="2" />
      <path d="M38.500 79.500h601" stroke="#000" />
      <path d="M39 80.500h600" stroke="#e5ab4a" />
      <path d="M38.500 81.500h601" stroke="#000" />

      <rect x="611" y="96" width="4" height="317" fill="#888" />
      <path d="M614.500 95v318" stroke="#000" />
      <path d="M610 95v319" stroke="#000" strokeWidth="2" />

      <rect x="632.500" y="81.500" width="7" height="347" fill="#888" stroke="#000" />
      {blockJoints.map((y) => (
        <path key={y} d={`M632 ${y + 0.5}h8`} stroke="#000" />
      ))}

      <path d="M453 429h187" stroke="#000" strokeWidth="2" />
      <path d="M452.500 429v208M454.500 429v208" stroke="#000" />
      <path d="M453.500 430v206" stroke="#e5ab4a" />
      <path d="M436 636.500h34" stroke="#000" />
    </svg>
  );
}

function CoreView() {
  return (
    <section className="flex min-w-0 flex-col border-r-2 border-[#ccc]">
      <div className="flex h-[25px] shrink-0 items-center justify-between bg-[#ccc] pr-[7px]">
        <div className="flex h-full w-[187px] items-center bg-white pl-1.5 text-[#333]">
          <PlanIcon />
          <span className="ml-[9px] font-bold">Level Parts - Core</span>
          <button type="button" aria-label="Close view" className="mr-1.5 ml-auto">
            <CloseIcon />
          </button>
        </div>
        <button type="button" aria-label="Open views">
          <svg width="10" height="10" viewBox="0 0 10 10" className="block" aria-hidden="true">
            <path d="M0 0h10v2H0zM0 4h10L5 9z" fill="#333" />
          </svg>
        </button>
      </div>
      <div className="flex min-h-0 flex-1 bg-white pr-0.5">
        <div className="relative min-w-0 flex-1">
          <CorePlan />
          <div className="absolute top-0.5 right-px">
            <NavigationBar />
          </div>
        </div>
        <div className="mt-0.5 flex w-[21px] flex-col border-r border-[#ccc] bg-[#f0f0f0]">
          <div className="flex h-[379px] flex-col items-center pt-[7px]">
            <Chevron up />
          </div>
          <div className="mr-px h-[21px] bg-[#cdcdcd]" />
        </div>
      </div>
    </section>
  );
}

function LevelView() {
  return (
    <section className="flex min-w-0 flex-col overflow-hidden">
      <div className="flex h-[25px] shrink-0 bg-[#ccc]">
        <button type="button" className="flex h-full w-40 items-center bg-[#eee] pl-1.5 text-[#444]">
          <span className="opacity-50">
            <PlanIcon />
          </span>
          <span className="ml-[9px]">Level 1</span>
        </button>
      </div>
      <div className="min-h-0 flex-1 border-t-2 border-l-2 border-[#eee] bg-white">
        <div className="relative h-full overflow-hidden">
          <LevelPlan />
          <div className="absolute top-0 -right-[18px] opacity-60">
            <NavigationBar />
          </div>
        </div>
      </div>
    </section>
  );
}

export default function App() {
  return (
    <div className="flex h-screen flex-col overflow-hidden bg-[#eee] font-['Open_Sans','Noto_Sans',sans-serif] text-sm text-black">
      <Ribbon />
      <div className="h-[33px] shrink-0" />
      <main className="flex min-h-0 flex-1 border-t-2 border-[#ccc]">
        <aside className="flex w-[330px] shrink-0 flex-col border-r-2 border-[#ccc]">
          <PropertiesPanel />
          <ProjectBrowser />
        </aside>
        <div className="grid min-w-0 flex-1 grid-cols-[773fr_729fr]">
          <CoreView />
          <LevelView />
        </div>
      </main>
    </div>
  );
}
